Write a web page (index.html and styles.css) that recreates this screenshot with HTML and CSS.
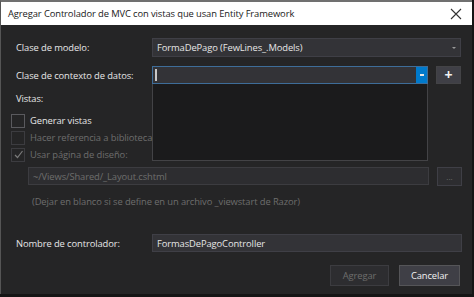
FILE: index.html
```html
<!DOCTYPE html>
<html lang="es">
<head>
<meta charset="utf-8">
<link rel="stylesheet" href="styles.css">
</head>
<body>
<div class="window">
  <div class="titlebar">
    <span class="title">Agregar Controlador de MVC con vistas que usan Entity Framework</span>
    <svg class="close" width="12" height="12" viewBox="0 0 12 12"><path d="M1 1L11 11M11 1L1 11" stroke="#333" stroke-width="1.1" fill="none"/></svg>
  </div>
  <div class="content">
    <div class="row r-model">
      <span class="label">Clase de modelo:</span>
      <div class="combo">
        <span class="combo-text">FormaDePago (FewLines_.Models)</span>
        <span class="combo-arrow small"></span>
      </div>
    </div>
    <div class="row r-ctx">
      <span class="label">Clase de contexto de datos:</span>
      <div class="combo active">
        <span class="caret"></span>
        <span class="combo-btn"><span class="tri"></span></span>
      </div>
      <button class="sq-btn plus">+</button>
      <div class="dropdown"></div>
    </div>
    <div class="section">Vistas:</div>
    <div class="check-row"><span class="box"></span><span>Generar vistas</span></div>
    <div class="check-row disabled"><span class="box"></span><span>Hacer referencia a bibliotecas de scripts</span></div>
    <div class="check-row disabled"><span class="box checked">
      <svg width="11" height="11" viewBox="0 0 11 11"><path d="M2 6L4.5 8.5L9.5 2" stroke="#7a7a7a" stroke-width="1.2" fill="none"/></svg>
    </span><span>Usar página de diseño:</span></div>
    <div class="layout-row">
      <div class="input disabled-input">~/Views/Shared/_Layout.cshtml</div>
      <button class="sq-btn dots">...</button>
    </div>
    <div class="hint">(Dejar en blanco si se define en un archivo _viewstart de Razor)</div>
    <div class="row r-name">
      <span class="label">Nombre de controlador:</span>
      <div class="input name-input">FormasDePagoController</div>
    </div>
    <div class="actions">
      <button class="btn disabled-btn">Agregar</button>
      <button class="btn">Cancelar</button>
    </div>
  </div>
</div>
</body>
</html>
```
FILE: styles.css
```css
* { box-sizing: border-box; }
html, body { margin: 0; padding: 0; }
body {
  width: 474px;
  height: 297px;
  background: #151515;
  font-family: "Open Sans", "Noto Sans", sans-serif;
  font-size: 9.4px;
  letter-spacing: -0.1px;
  overflow: hidden;
}
.window {
  width: 472px;
  height: 294px;
  background: #252526;
  border-top: 2px solid #707070;
  border-left: 1px solid #555;
  display: flex;
  flex-direction: column;
}
.titlebar {
  height: 23px;
  background: #ffffff;
  display: flex;
  align-items: center;
  justify-content: space-between;
  padding: 0 8px 0 7px;
  color: #1a1a1a;
}
.close { margin-right: 2px; }
.content {
  flex: 1;
  padding: 13px 10px 0 15px;
  color: #e6e6e6;
  position: relative;
  white-space: nowrap;
}
.row {
  display: flex;
  align-items: center;
  position: relative;
}
.label { width: 136px; flex: none; }
.combo {
  height: 19px;
  width: 309px;
  background: #333337;
  border: 1px solid #3f3f46;
  display: flex;
  align-items: center;
  padding-left: 4px;
  position: relative;
}
.combo-text { flex: 1; }
.combo-arrow.small {
  width: 0; height: 0;
  border-left: 2px solid transparent;
  border-right: 2px solid transparent;
  border-top: 2px solid #999;
  margin-right: 4px;
}
.r-ctx { margin-top: 9px; }
.combo.active {
  height: 18px;
  width: 276px;
  border-color: #3e6d99;
  padding-left: 2px;
}
.caret {
  width: 2px;
  height: 12px;
  background: #c8c8c8;
  flex: none;
}
.combo-btn {
  margin-left: auto;
  width: 11px;
  height: 16px;
  background: #007acc;
  display: flex;
  align-items: center;
  justify-content: center;
}
.tri {
  width: 4px; height: 2px;
  background: #e8e8e8;
}
.sq-btn {
  font-family: inherit;
  background: #3f3f46;
  border: 1px solid #434346;
  color: #f1f1f1;
  padding: 0;
  margin-left: 8px;
  display: flex;
  align-items: center;
  justify-content: center;
}
.plus {
  width: 25px;
  height: 18px;
  font-size: 14px;
  font-weight: bold;
  line-height: 1;
}
.dropdown {
  position: absolute;
  left: 136px;
  top: 18px;
  width: 276px;
  height: 77px;
  background: #1b1b1c;
  border: 1px solid #434346;
  border-top: none;
  z-index: 2;
}
.section { margin-top: 7px; height: 16px; line-height: 16px; }
.check-row {
  display: flex;
  align-items: center;
  height: 17px;
  margin-left: -5px;
}
.section + .check-row { margin-top: 5px; }
.box {
  width: 14px;
  height: 14px;
  border: 1px solid #5a5a5e;
  margin-right: 5px;
  display: flex;
  align-items: center;
  justify-content: center;
  flex: none;
}
.check-row.disabled { color: #6d6d6d; }
.check-row.disabled .box { border-color: #3c3c40; }
.layout-row {
  display: flex;
  margin-top: 4px;
  margin-left: 12px;
  height: 19px;
}
.input {
  height: 18px;
  background: #333337;
  border: 1px solid #3f3f46;
  padding-left: 4px;
  display: flex;
  align-items: center;
}
.disabled-input {
  width: 401px;
  background: #2d2d30;
  color: #6d6d6d;
  border-color: #3c3c40;
}
.dots {
  width: 25px;
  height: 19px;
  background: #2d2d30;
  border-color: #3f3f46;
  color: #6d6d6d;
  font-size: 8px;
}
.hint {
  margin-top: 8px;
  margin-left: 16px;
  color: #6d6d6d;
  height: 16px;
  line-height: 16px;
}
.r-name { margin-top: 24px; }
.name-input { width: 310px; }
.actions {
  display: flex;
  justify-content: flex-end;
  gap: 10px;
  margin-top: 13px;
  padding-right: 2px;
}
.btn {
  font-family: inherit;
  font-size: 9.4px;
  letter-spacing: -0.1px;
  height: 21px;
  width: 61px;
  background: #3f3f46;
  border: 1px solid #555558;
  color: #f1f1f1;
  padding: 0;
}
.disabled-btn {
  width: 59px;
  background: #2d2d30;
  border-color: #3c3c40;
  color: #6d6d6d;
}
```
